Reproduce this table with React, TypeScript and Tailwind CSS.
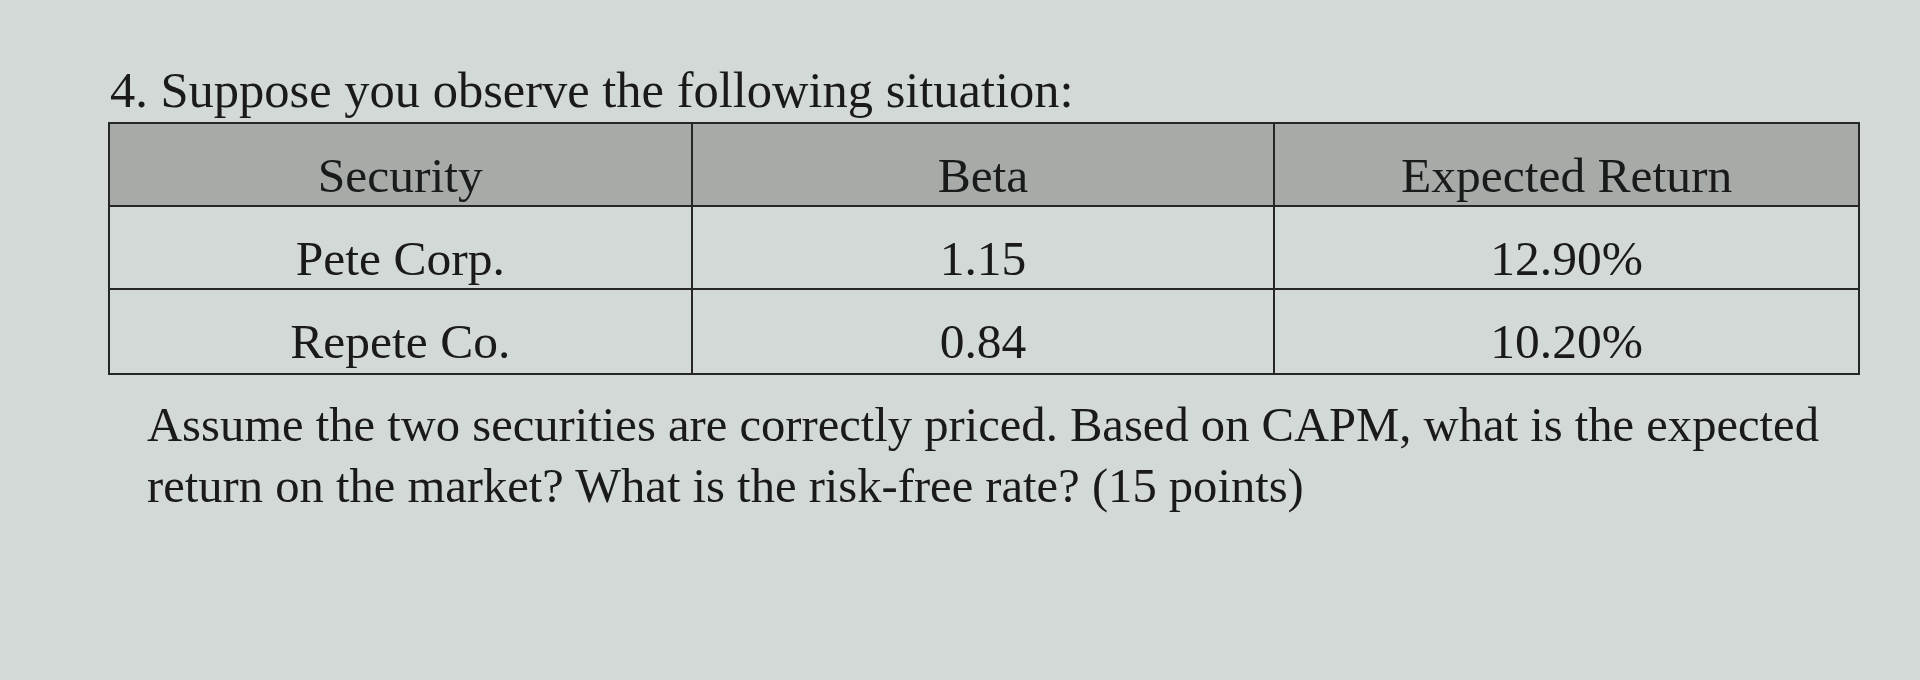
const rows = [
  { security: "Pete Corp.", beta: "1.15", ret: "12.90%" },
  { security: "Repete Co.", beta: "0.84", ret: "10.20%" },
];

function Cell({
  children,
  header,
  last,
  bottom,
}: {
  children: React.ReactNode;
  header?: boolean;
  last?: boolean;
  bottom?: boolean;
}) {
  return (
    <div
      className={`h-[83px] pt-[24px] text-center leading-[56px] border-[#262626] ${
        header ? "bg-[#a6aba8]" : "bg-[#d3d9d6]"
      } ${last ? "" : "border-r-2"} ${bottom ? "" : "border-b-2"}`}
    >
      {children}
    </div>
  );
}

export default function App() {
  return (
    <div
      className="h-[680px] w-full bg-[#d3d9d6] text-[#1a1a1a] pl-[108px] pt-[62px] overflow-hidden"
      style={{ fontFamily: '"Liberation Serif", "Times New Roman", serif' }}
    >
      <h1 className="text-[50.5px] leading-[57px] pl-[2px]">
        4. Suppose you observe the following situation:
      </h1>
      <div className="mt-[3px] w-[1752px] border-2 border-[#262626] grid grid-cols-3 text-[49.5px]">
        <Cell header>Security</Cell>
        <Cell header>Beta</Cell>
        <Cell header last>
          Expected Return
        </Cell>
        {rows.map((r, i) => {
          const bottom = i === rows.length - 1;
          return [
            <Cell key={`s${i}`} bottom={bottom}>
              {r.security}
            </Cell>,
            <Cell key={`b${i}`} bottom={bottom}>
              {r.beta}
            </Cell>,
            <Cell key={`r${i}`} bottom={bottom} last>
              {r.ret}
            </Cell>,
          ];
        })}
      </div>
      <p className="mt-[20px] pl-[39px] text-[48.6px] leading-[61px] w-[1780px]">
        Assume the two securities are correctly priced. Based on CAPM, what is
        the expected
        <br />
        return on the market? What is the risk-free rate? (15 points)
      </p>
    </div>
  );
}
